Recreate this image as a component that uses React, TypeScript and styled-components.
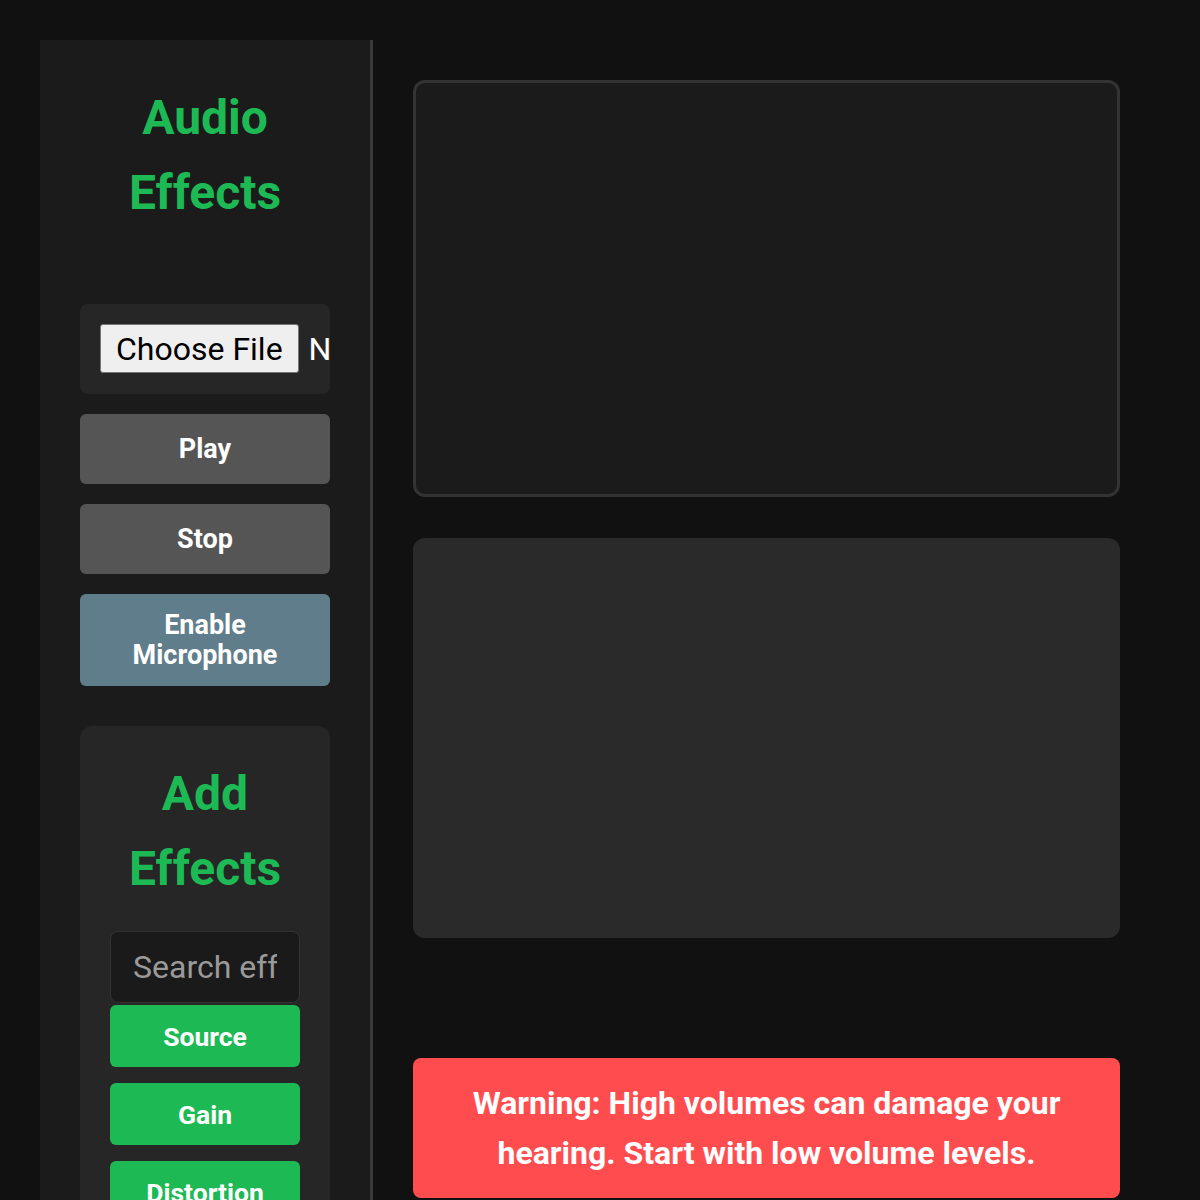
import React from "react";
import styled, { createGlobalStyle } from "styled-components";

const Global = createGlobalStyle`
  html, body { margin: 0; padding: 0; background: #111111; }
  body { font-family: Roboto, "Liberation Sans", sans-serif; color: #fff; }
  * { box-sizing: border-box; }
`;

const Page = styled.div`
  display: flex;
  align-items: flex-start;
  padding: 40px 40px 0 40px;
  min-height: 1200px;
`;

const Sidebar = styled.aside`
  width: 333px;
  flex-shrink: 0;
  background: #1b1b1b;
  border-right: 3px solid #3a3a3a;
  padding: 40px;
  min-height: 1300px;
  display: flex;
  flex-direction: column;
`;

const Title = styled.h1<{ $mb: number }>`
  margin: 0 0 ${(p) => p.$mb}px 0;
  color: #1db954;
  font-size: 48px;
  font-weight: 700;
  line-height: 75px;
  text-align: center;
`;

const FileBox = styled.div`
  background: #262626;
  border-radius: 8px;
  padding: 20px;
  height: 90px;
  overflow: hidden;
  white-space: nowrap;
  margin-bottom: 20px;
`;

const FileInput = styled.input`
  font-size: 32px;
  font-family: Roboto, "Liberation Sans", sans-serif;
  color: #fff;
  &::file-selector-button {
    font-size: 32px;
    font-family: Roboto, "Liberation Sans", sans-serif;
    background: #efefef;
    color: #000;
    border: 1px solid #767676;
    border-radius: 3px;
    height: 49px;
    padding: 0 15px;
    margin-right: 10px;
  }
`;

const ControlButton = styled.button<{ $bg: string; $h: number }>`
  display: block;
  width: 100%;
  height: ${(p) => p.$h}px;
  background: ${(p) => p.$bg};
  color: #fff;
  border: none;
  border-radius: 6px;
  font-family: Roboto, "Liberation Sans", sans-serif;
  font-size: 27px;
  font-weight: 700;
  line-height: 30px;
  margin-bottom: 20px;
  padding: 0 30px;
`;

const EffectsPanel = styled.section`
  margin-top: 20px;
  background: #262626;
  border-radius: 12px;
  padding: 30px 30px 0 30px;
  display: flex;
  flex-direction: column;
`;

const Search = styled.input`
  width: 100%;
  height: 72px;
  background: #1a1a1a;
  border: 1px solid #333;
  border-radius: 8px;
  padding: 0 22px;
  font-family: Roboto, "Liberation Sans", sans-serif;
  font-size: 32px;
  color: #fff;
  margin-bottom: 2px;
  &::placeholder { color: #9a9a9a; }
`;

const EffectButton = styled.button`
  display: block;
  width: 100%;
  height: 62px;
  background: #1db954;
  color: #fff;
  border: none;
  border-radius: 6px;
  font-family: Roboto, "Liberation Sans", sans-serif;
  font-size: 26.5px;
  font-weight: 700;
  margin-bottom: 16px;
`;

const Main = styled.main`
  flex: 1;
  padding: 40px;
  display: flex;
  flex-direction: column;
`;

const Visualizer = styled.div`
  height: 417px;
  background: #1b1b1b;
  border: 3px solid #333;
  border-radius: 12px;
  margin-bottom: 41px;
`;

const Workspace = styled.div`
  height: 400px;
  background: #2a2a2a;
  border-radius: 12px;
  margin-bottom: 120px;
`;

const Warning = styled.div`
  background: #ff4d4f;
  border-radius: 8px;
  padding: 20px 40px;
  color: #fff;
  font-size: 32px;
  font-weight: 700;
  line-height: 50px;
  text-align: center;
`;

export default function App() {
  return (
    <>
      <Global />
      <Page>
        <Sidebar>
          <Title $mb={74}>Audio Effects</Title>
          <FileBox>
            <FileInput type="file" accept="audio/*" />
          </FileBox>
          <ControlButton $bg="#555555" $h={70}>Play</ControlButton>
          <ControlButton $bg="#555555" $h={70}>Stop</ControlButton>
          <ControlButton $bg="#607d8b" $h={92}>Enable Microphone</ControlButton>
          <EffectsPanel>
            <Title $mb={25}>Add Effects</Title>
            <Search placeholder="Search effects..." />
            <EffectButton>Source</EffectButton>
            <EffectButton>Gain</EffectButton>
            <EffectButton>Distortion</EffectButton>
            <EffectButton>Delay</EffectButton>
          </EffectsPanel>
        </Sidebar>
        <Main>
          <Visualizer />
          <Workspace />
          <Warning>Warning: High volumes can damage your hearing. Start with low volume levels.</Warning>
        </Main>
      </Page>
    </>
  );
}
